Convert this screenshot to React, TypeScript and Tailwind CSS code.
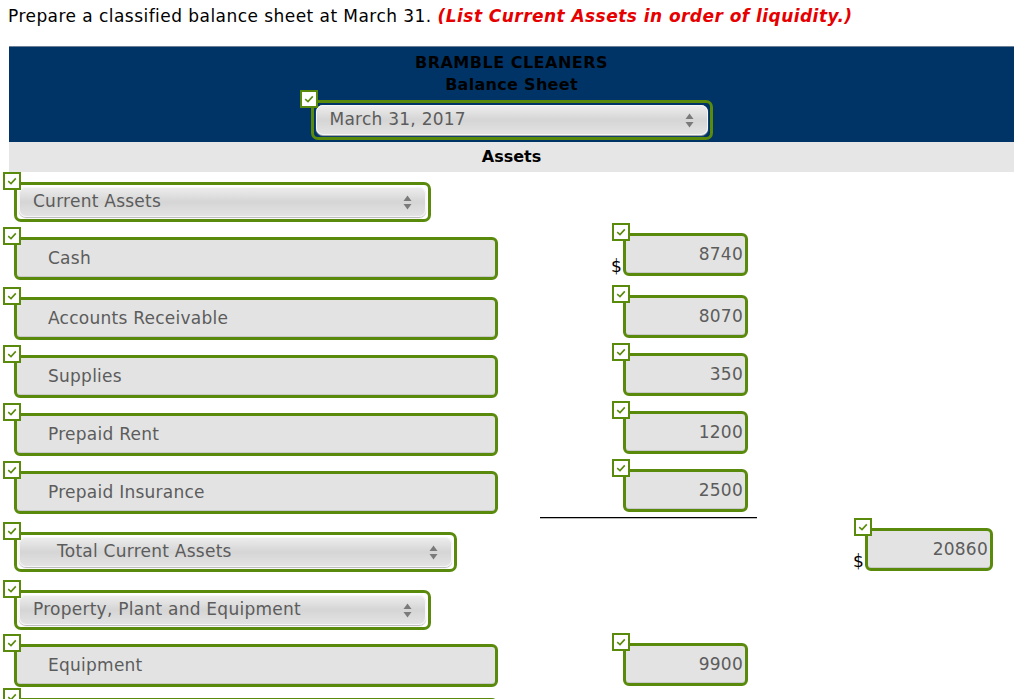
import React from 'react';

// Classified balance sheet worksheet (graded answer view)

function Check() {
  return (
    <span className="absolute -left-[14px] -top-[13px] z-10 flex h-[18px] w-[18px] items-center justify-center border-2 border-[#5a8a0c] bg-white">
      <svg width="10" height="8" viewBox="0 0 10 8">
        <path d="M1.2 4.2 L4 6.6 L8.8 1.4" stroke="#5a8a0c" strokeWidth="1.6" fill="none" />
      </svg>
    </span>
  );
}

function Arrows() {
  return (
    <svg width="9" height="15" viewBox="0 0 9 15" className="shrink-0">
      <path d="M4.5 0.5 L8.5 6 L0.5 6 Z" fill="#7a7a7a" />
      <path d="M0.5 9 L8.5 9 L4.5 14.5 Z" fill="#7a7a7a" />
    </svg>
  );
}

function SelectBox({
  label,
  w,
  indent = 'pl-[14px]',
  dark = false,
}: {
  label: string;
  w: string;
  indent?: string;
  dark?: boolean;
}) {
  return (
    <div
      className={`relative ${w} h-[40px] rounded-[7px] border-[3px] border-[#5a8a0c] p-[2px] ${
        dark ? 'bg-[#003466]' : 'bg-white'
      }`}
    >
      <Check />
      <div
        className={`flex h-full items-center justify-between rounded-[7px] bg-gradient-to-b from-[#eeeeee] via-[#d5d5d5] to-[#e4e4e4] pr-[14px] shadow-[inset_0_0_0_1px_#f6f6f6,0_1px_1px_#b5b5b5] ${indent}`}
      >
        <span className="text-[17px] tracking-[0.25px] text-[#5c5c5c]">{label}</span>
        <Arrows />
      </div>
    </div>
  );
}

function LabelBox({ label }: { label: string }) {
  return (
    <div className="relative flex h-[43px] w-[484px] items-center rounded-[6px] border-[3px] border-[#5a8a0c] bg-[#e3e3e3] pl-[31px] shadow-[inset_0_-1px_0_#c9c9c9]">
      <Check />
      <span className="text-[17px] tracking-[0.25px] text-[#5c5c5c]">{label}</span>
    </div>
  );
}

function AmountBox({ value, dollar = false, w = 'w-[125px]' }: { value: string; dollar?: boolean; w?: string }) {
  return (
    <div
      className={`relative flex h-[43px] ${w} items-center justify-end rounded-[6px] border-[3px] border-[#5a8a0c] bg-[#e3e3e3] pr-[2px] shadow-[inset_0_-1px_0_#c9c9c9]`}
    >
      <Check />
      {dollar && <span className="absolute -left-[15px] bottom-[-6px] text-[17px] text-black">$</span>}
      <span className="text-[17px] tracking-[0.25px] text-[#5c5c5c]">{value}</span>
    </div>
  );
}

type Item = { label: string; amount: string; dollar?: boolean };

const currentItems: Item[] = [
  { label: 'Cash', amount: '8740', dollar: true },
  { label: 'Accounts Receivable', amount: '8070' },
  { label: 'Supplies', amount: '350' },
  { label: 'Prepaid Rent', amount: '1200' },
  { label: 'Prepaid Insurance', amount: '2500' },
];

const rowHeights = ['h-[60px]', 'h-[58px]', 'h-[58px]', 'h-[58px]', 'h-[56px]'];
const amountTops = ['mt-[7px]', 'mt-[9px]', 'mt-[9px]', 'mt-[9px]', 'mt-[9px]'];

export default function App() {
  return (
    <div className="h-[699px] overflow-hidden bg-white font-['DejaVu_Sans',Verdana,sans-serif]">
      <div className="h-[46px] pl-[8px] pt-[5px] text-[17px] leading-[22px] tracking-[0.45px] text-black">
        Prepare a classified balance sheet at March 31.{' '}
        <span className="font-bold italic text-[#e60000]">(List Current Assets in order of liquidity.)</span>
      </div>

      <div className="ml-[9px] w-[1005px]">
        <div className="flex h-[96px] flex-col items-center bg-[#003466] pt-[6px] shadow-[inset_0_1px_0_#6b7f95]">
          <div className="text-[16px] font-bold leading-[22px] tracking-[0.5px] text-black">BRAMBLE CLEANERS</div>
          <div className="text-[16px] font-bold leading-[22px] tracking-[0.3px] text-black">Balance Sheet</div>
          <div className="mt-[4px]">
            <SelectBox label="March 31, 2017" w="w-[402px]" dark />
          </div>
        </div>
        <div className="flex h-[30px] items-center justify-center bg-[#e6e6e6] text-[16px] font-bold text-black">
          Assets
        </div>
      </div>

      {/* Current assets heading */}
      <div className="grid h-[54px] grid-cols-[623px_242px_1fr]">
        <div className="pl-[14px] pt-[10px]">
          <SelectBox label="Current Assets" w="w-[417px]" />
        </div>
      </div>

      {currentItems.map((it, i) => (
        <div key={it.label} className={`grid ${rowHeights[i]} grid-cols-[623px_242px_1fr]`}>
          <div className="pl-[14px] pt-[11px]">
            <LabelBox label={it.label} />
          </div>
          <div className={amountTops[i]}>
            <AmountBox value={it.amount} dollar={it.dollar} />
          </div>
        </div>
      ))}

      <div className="h-[3px] pt-[1px]">
        <div className="ml-[540px] h-px w-[217px] bg-black shadow-[0_1px_0_#bbb]" />
      </div>

      {/* Total current assets */}
      <div className="grid h-[61px] grid-cols-[623px_242px_1fr]">
        <div className="pl-[14px] pt-[13px]">
          <SelectBox label="Total Current Assets" w="w-[443px]" indent="pl-[38px]" />
        </div>
        <div />
        <div className="pt-[9px]">
          <AmountBox value="20860" dollar w="w-[128px]" />
        </div>
      </div>

      {/* Property, plant and equipment */}
      <div className="grid h-[53px] grid-cols-[623px_242px_1fr]">
        <div className="pl-[14px] pt-[10px]">
          <SelectBox label="Property, Plant and Equipment" w="w-[417px]" />
        </div>
      </div>

      <div className="grid h-[55px] grid-cols-[623px_242px_1fr]">
        <div className="pl-[14px] pt-[11px]">
          <LabelBox label="Equipment" />
        </div>
        <div className="pt-[10px]">
          <AmountBox value="9900" />
        </div>
      </div>

      <div className="grid h-[55px] grid-cols-[623px_242px_1fr]">
        <div className="pl-[14px] pt-[10px]">
          <LabelBox label="" />
        </div>
      </div>
    </div>
  );
}
